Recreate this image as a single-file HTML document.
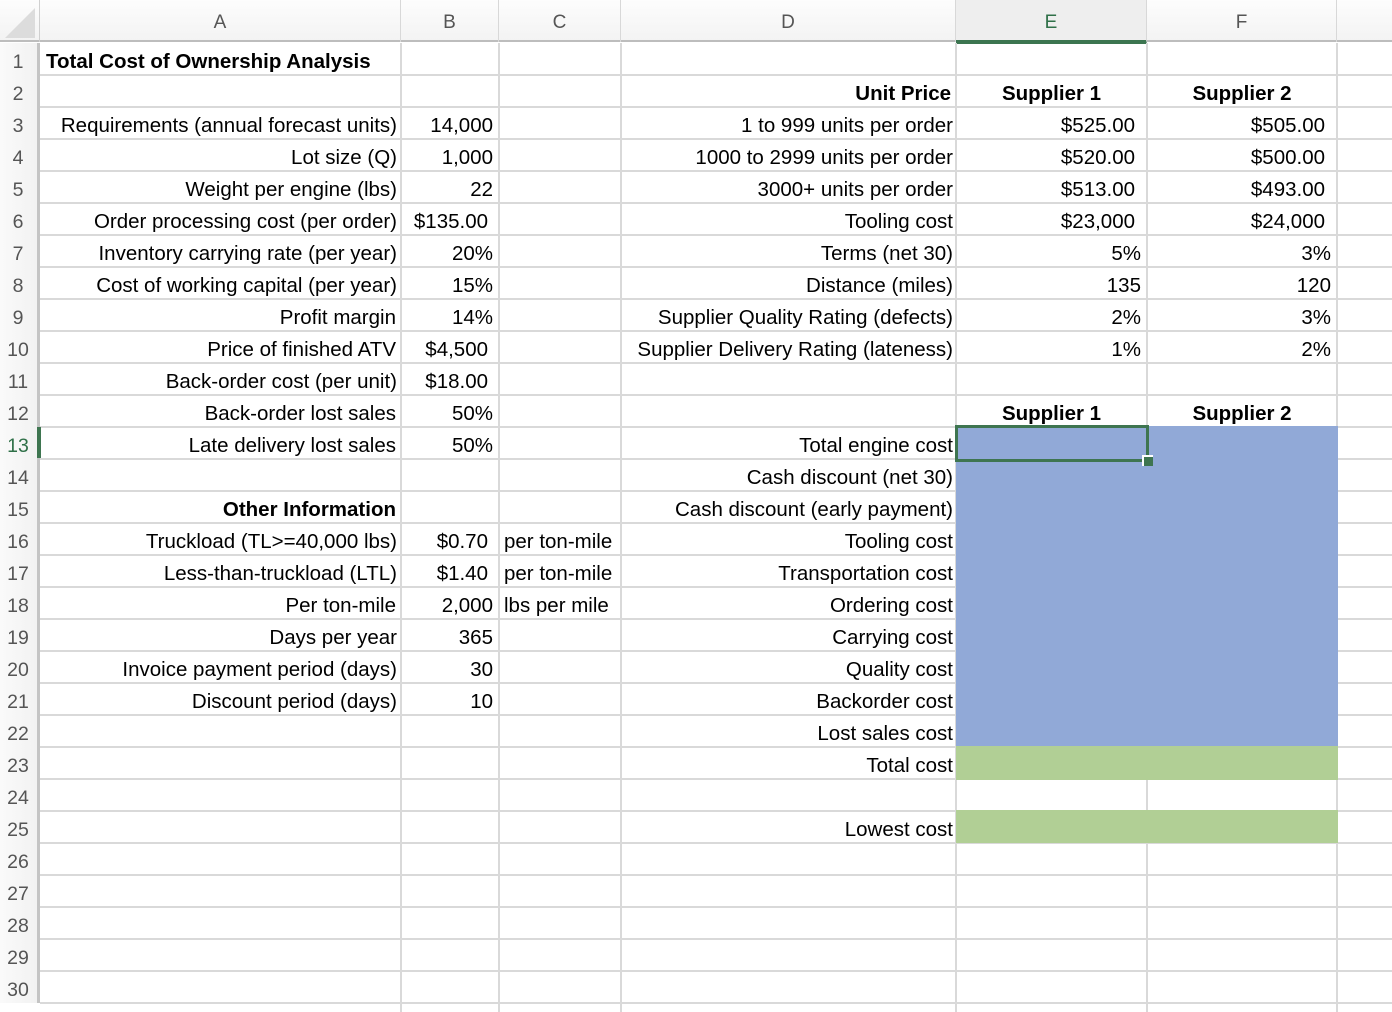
<!DOCTYPE html>
<html><head><meta charset="utf-8"><style>
*{margin:0;padding:0;box-sizing:border-box}
body{width:1392px;height:1012px;overflow:hidden;background:#fff;position:relative;font-family:"Liberation Sans",Arial,sans-serif;font-size:20.5px;color:#000}
.hdr{position:absolute;top:0;left:0;width:1392px;height:42px;background:linear-gradient(#fdfdfd,#f3f3f3);border-bottom:2px solid #bdbdbd}
.hc{position:absolute;top:0;height:42px;line-height:46px;text-align:center;color:#555;font-size:19px;border-right:1px solid #d8d8d8}
.rn{position:absolute;left:0;width:40px;height:960px;top:43px;background:linear-gradient(90deg,#fafafa,#f2f2f2);border-right:3px solid #c4c4c4}
.n{position:absolute;left:0;width:36px;height:32px;line-height:38px;text-align:center;color:#555;font-size:19.5px}
.hl{position:absolute;left:40px;width:1352px;height:2px;background:#d9d9d9}
.vl{position:absolute;top:43px;width:2px;height:969px;background:#d9d9d9}
.f{position:absolute}
.c{position:absolute;height:32px;line-height:38px;white-space:nowrap;overflow:visible}
.r{text-align:right}
.b{font-weight:bold}
.ctr{text-align:center}
</style></head><body>
<div class="hdr"></div>
<div style="position:absolute;left:0;top:0;width:40px;height:42px;border-right:1px solid #d0d0d0"><div style="position:absolute;right:4px;bottom:4px;width:0;height:0;border-left:30px solid transparent;border-bottom:30px solid #dcdcdc"></div></div>
<div class="hc" style="left:40px;width:361px">A</div>
<div class="hc" style="left:401px;width:98px">B</div>
<div class="hc" style="left:499px;width:122px">C</div>
<div class="hc" style="left:621px;width:335px">D</div>
<div class="hc" style="left:956px;width:191px;background:#eeeeee;color:#2f7048;border-bottom:4px solid #3c7550;height:44px">E</div>
<div class="hc" style="left:1147px;width:190px">F</div>
<div class="hc" style="left:1337px;width:55px;border-right:none"></div>

<div class="rn"></div>
<div class="hl" style="top:74px"></div><div class="hl" style="top:106px"></div><div class="hl" style="top:138px"></div><div class="hl" style="top:170px"></div><div class="hl" style="top:202px"></div><div class="hl" style="top:234px"></div><div class="hl" style="top:266px"></div><div class="hl" style="top:298px"></div><div class="hl" style="top:330px"></div><div class="hl" style="top:362px"></div><div class="hl" style="top:394px"></div><div class="hl" style="top:426px"></div><div class="hl" style="top:458px"></div><div class="hl" style="top:490px"></div><div class="hl" style="top:522px"></div><div class="hl" style="top:554px"></div><div class="hl" style="top:586px"></div><div class="hl" style="top:618px"></div><div class="hl" style="top:650px"></div><div class="hl" style="top:682px"></div><div class="hl" style="top:714px"></div><div class="hl" style="top:746px"></div><div class="hl" style="top:778px"></div><div class="hl" style="top:810px"></div><div class="hl" style="top:842px"></div><div class="hl" style="top:874px"></div><div class="hl" style="top:906px"></div><div class="hl" style="top:938px"></div><div class="hl" style="top:970px"></div><div class="hl" style="top:1002px"></div>
<div class="vl" style="left:400px"></div><div class="vl" style="left:498px"></div><div class="vl" style="left:620px"></div><div class="vl" style="left:955px"></div><div class="vl" style="left:1146px"></div><div class="vl" style="left:1336px"></div>

<div class="f" style="left:956px;top:426px;width:382px;height:320px;background:#91a9d7"></div>
<div class="f" style="left:956px;top:746px;width:382px;height:34px;background:#b1cf95"></div>
<div class="f" style="left:956px;top:810px;width:382px;height:33px;background:#b1cf95"></div>
<div class="f" style="left:955px;top:425px;width:194px;height:37px;border:3px solid #3e7550"></div>
<div class="f" style="left:1142px;top:455px;width:11px;height:11px;background:#3e7550;border-left:2px solid #fff;border-top:2px solid #fff"></div>

<div class="n" style="top:43px">1</div><div class="n" style="top:75px">2</div><div class="n" style="top:107px">3</div><div class="n" style="top:139px">4</div><div class="n" style="top:171px">5</div><div class="n" style="top:203px">6</div><div class="n" style="top:235px">7</div><div class="n" style="top:267px">8</div><div class="n" style="top:299px">9</div><div class="n" style="top:331px">10</div><div class="n" style="top:363px">11</div><div class="n" style="top:395px">12</div><div class="n" style="top:427px;color:#2f7048">13</div><div class="n" style="top:459px">14</div><div class="n" style="top:491px">15</div><div class="n" style="top:523px">16</div><div class="n" style="top:555px">17</div><div class="n" style="top:587px">18</div><div class="n" style="top:619px">19</div><div class="n" style="top:651px">20</div><div class="n" style="top:683px">21</div><div class="n" style="top:715px">22</div><div class="n" style="top:747px">23</div><div class="n" style="top:779px">24</div><div class="n" style="top:811px">25</div><div class="n" style="top:843px">26</div><div class="n" style="top:875px">27</div><div class="n" style="top:907px">28</div><div class="n" style="top:939px">29</div><div class="n" style="top:971px">30</div>
<div class="f" style="left:37px;top:427px;width:4px;height:31px;background:#3e7550"></div>

<div class="c b" style="left:46px;top:43px">Total Cost of Ownership Analysis</div>
<div class="c r" style="left:40px;width:357px;top:107px">Requirements (annual forecast units)</div>
<div class="c r" style="left:40px;width:357px;top:139px">Lot size (Q)</div>
<div class="c r" style="left:40px;width:357px;top:171px">Weight per engine (lbs)</div>
<div class="c r" style="left:40px;width:357px;top:203px">Order processing cost (per order)</div>
<div class="c r" style="left:40px;width:357px;top:235px">Inventory carrying rate (per year)</div>
<div class="c r" style="left:40px;width:357px;top:267px">Cost of working capital (per year)</div>
<div class="c r" style="left:40px;width:356px;top:299px">Profit margin</div>
<div class="c r" style="left:40px;width:356px;top:331px">Price of finished ATV</div>
<div class="c r" style="left:40px;width:357px;top:363px">Back-order cost (per unit)</div>
<div class="c r" style="left:40px;width:356px;top:395px">Back-order lost sales</div>
<div class="c r" style="left:40px;width:356px;top:427px">Late delivery lost sales</div>
<div class="c r b" style="left:40px;width:356px;top:491px">Other Information</div>
<div class="c r" style="left:40px;width:357px;top:523px">Truckload (TL&gt;=40,000 lbs)</div>
<div class="c r" style="left:40px;width:357px;top:555px">Less-than-truckload (LTL)</div>
<div class="c r" style="left:40px;width:356px;top:587px">Per ton-mile</div>
<div class="c r" style="left:40px;width:357px;top:619px">Days per year</div>
<div class="c r" style="left:40px;width:357px;top:651px">Invoice payment period (days)</div>
<div class="c r" style="left:40px;width:357px;top:683px">Discount period (days)</div>

<div class="c r" style="left:401px;width:92px;top:107px">14,000</div>
<div class="c r" style="left:401px;width:92px;top:139px">1,000</div>
<div class="c r" style="left:401px;width:92px;top:171px">22</div>
<div class="c r" style="left:401px;width:87px;top:203px">$135.00</div>
<div class="c r" style="left:401px;width:92px;top:235px">20%</div>
<div class="c r" style="left:401px;width:92px;top:267px">15%</div>
<div class="c r" style="left:401px;width:92px;top:299px">14%</div>
<div class="c r" style="left:401px;width:87px;top:331px">$4,500</div>
<div class="c r" style="left:401px;width:87px;top:363px">$18.00</div>
<div class="c r" style="left:401px;width:92px;top:395px">50%</div>
<div class="c r" style="left:401px;width:92px;top:427px">50%</div>
<div class="c r" style="left:401px;width:87px;top:523px">$0.70</div>
<div class="c r" style="left:401px;width:87px;top:555px">$1.40</div>
<div class="c r" style="left:401px;width:92px;top:587px">2,000</div>
<div class="c r" style="left:401px;width:92px;top:619px">365</div>
<div class="c r" style="left:401px;width:92px;top:651px">30</div>
<div class="c r" style="left:401px;width:92px;top:683px">10</div>

<div class="c" style="left:504px;top:523px">per ton-mile</div>
<div class="c" style="left:504px;top:555px">per ton-mile</div>
<div class="c" style="left:504px;top:587px">lbs per mile</div>

<div class="c r b" style="left:621px;width:330px;top:75px">Unit Price</div>
<div class="c r" style="left:621px;width:332px;top:107px">1 to 999 units per order</div>
<div class="c r" style="left:621px;width:332px;top:139px">1000 to 2999 units per order</div>
<div class="c r" style="left:621px;width:332px;top:171px">3000+ units per order</div>
<div class="c r" style="left:621px;width:332px;top:203px">Tooling cost</div>
<div class="c r" style="left:621px;width:332px;top:235px">Terms (net 30)</div>
<div class="c r" style="left:621px;width:332px;top:267px">Distance (miles)</div>
<div class="c r" style="left:621px;width:332px;top:299px">Supplier Quality Rating (defects)</div>
<div class="c r" style="left:621px;width:332px;top:331px">Supplier Delivery Rating (lateness)</div>
<div class="c r" style="left:621px;width:332px;top:427px">Total engine cost</div>
<div class="c r" style="left:621px;width:332px;top:459px">Cash discount (net 30)</div>
<div class="c r" style="left:621px;width:332px;top:491px">Cash discount (early payment)</div>
<div class="c r" style="left:621px;width:332px;top:523px">Tooling cost</div>
<div class="c r" style="left:621px;width:332px;top:555px">Transportation cost</div>
<div class="c r" style="left:621px;width:332px;top:587px">Ordering cost</div>
<div class="c r" style="left:621px;width:332px;top:619px">Carrying cost</div>
<div class="c r" style="left:621px;width:332px;top:651px">Quality cost</div>
<div class="c r" style="left:621px;width:332px;top:683px">Backorder cost</div>
<div class="c r" style="left:621px;width:332px;top:715px">Lost sales cost</div>
<div class="c r" style="left:621px;width:332px;top:747px">Total cost</div>
<div class="c r" style="left:621px;width:332px;top:811px">Lowest cost</div>

<div class="c b ctr" style="left:956px;width:191px;top:75px">Supplier 1</div>
<div class="c r" style="left:956px;width:179px;top:107px">$525.00</div>
<div class="c r" style="left:956px;width:179px;top:139px">$520.00</div>
<div class="c r" style="left:956px;width:179px;top:171px">$513.00</div>
<div class="c r" style="left:956px;width:179px;top:203px">$23,000</div>
<div class="c r" style="left:956px;width:185px;top:235px">5%</div>
<div class="c r" style="left:956px;width:185px;top:267px">135</div>
<div class="c r" style="left:956px;width:185px;top:299px">2%</div>
<div class="c r" style="left:956px;width:185px;top:331px">1%</div>
<div class="c b ctr" style="left:956px;width:191px;top:395px">Supplier 1</div>

<div class="c b ctr" style="left:1147px;width:190px;top:75px">Supplier 2</div>
<div class="c r" style="left:1147px;width:178px;top:107px">$505.00</div>
<div class="c r" style="left:1147px;width:178px;top:139px">$500.00</div>
<div class="c r" style="left:1147px;width:178px;top:171px">$493.00</div>
<div class="c r" style="left:1147px;width:178px;top:203px">$24,000</div>
<div class="c r" style="left:1147px;width:184px;top:235px">3%</div>
<div class="c r" style="left:1147px;width:184px;top:267px">120</div>
<div class="c r" style="left:1147px;width:184px;top:299px">3%</div>
<div class="c r" style="left:1147px;width:184px;top:331px">2%</div>
<div class="c b ctr" style="left:1147px;width:190px;top:395px">Supplier 2</div>
</body></html>
